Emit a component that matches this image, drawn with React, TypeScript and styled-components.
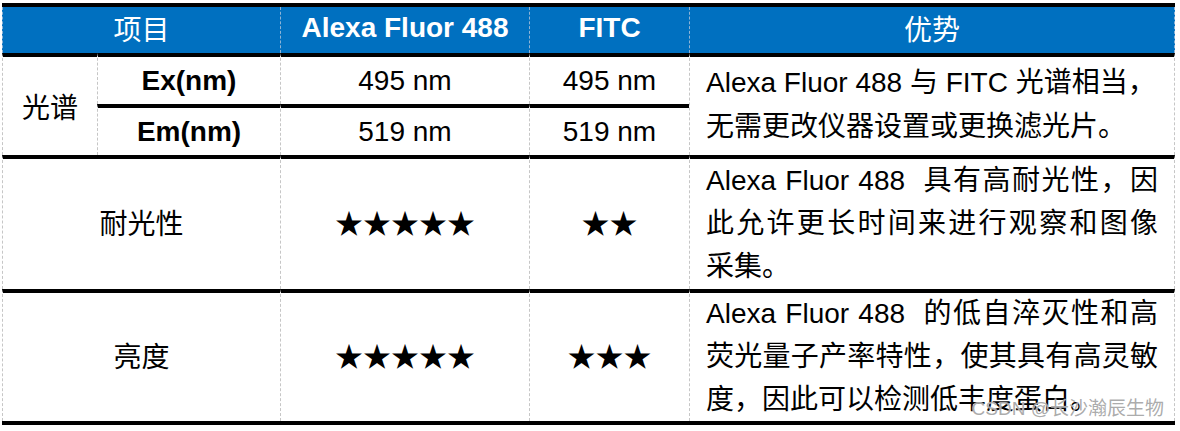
import React from "react";
import { createGlobalStyle, styled } from "styled-components";

const GlobalStyle = createGlobalStyle`
    html, body {
        margin: 0;
        padding: 0;
        background: #ffffff;
    }
    body {
        font-family: "Liberation Sans", "Noto Sans CJK SC", sans-serif;
        color: #000000;
    }
`;

const DASH = "1px dashed #c6c6c6";

const Table = styled.div`
    position: relative;
    margin: 3px 0 0 2px;
    width: 1173px;
    display: grid;
    grid-template-columns: 95px 183px 249px 160px 486px;
    grid-template-rows: 46px 51px 51px 134px 132px;
    border-top: 4px solid #000;
    border-bottom: 4px solid #000;
    font-size: 28px;
`;

interface CellProps {
    $col: string;
    $row: string;
    $rule?: boolean;
    $bold?: boolean;
    $last?: boolean;
}

const Cell = styled.div<CellProps>`
    grid-column: ${(p) => p.$col};
    grid-row: ${(p) => p.$row};
    box-sizing: border-box;
    display: flex;
    align-items: center;
    justify-content: center;
    border-left: ${DASH};
    border-right: ${(p) => (p.$last ? DASH : "none")};
    border-top: ${(p) => (p.$rule ? "4px solid #000" : "none")};
    font-weight: ${(p) => (p.$bold ? 700 : 400)};
    white-space: nowrap;
`;

const HeadCell = styled(Cell)`
    background: #0070c0;
    color: #ffffff;
    padding-bottom: 4px;
    border-left: 1px dashed #8fb4d6;
    border-right: ${(p) => (p.$last ? "1px dashed #8fb4d6" : "none")};
`;

const LabelCell = styled(Cell)`
    padding-bottom: 4px;
`;

const Stars = styled.span`
    font-family: "Noto Sans CJK SC", sans-serif;
    letter-spacing: 0;
`;

const DescCell = styled(Cell)`
    flex-direction: column;
    align-items: stretch;
    justify-content: center;
    padding: 0 16px 2px;
    white-space: normal;
`;

const DescLine = styled.div<{ $justify?: boolean; $lh?: number }>`
    line-height: ${(p) => p.$lh ?? 43}px;
    text-align: ${(p) => (p.$justify ? "justify" : "left")};
    text-align-last: ${(p) => (p.$justify ? "justify" : "left")};
`;

const Watermark = styled.div`
    position: absolute;
    right: 11px;
    bottom: 3px;
    font-size: 19px;
    line-height: 1;
    color: rgba(150, 150, 150, 0.8);
    text-shadow: 0 0 1px #ffffff;
    pointer-events: none;
`;

const App = (): React.JSX.Element => {
    return (
        <>
            <GlobalStyle />
            <Table>
                <HeadCell $col="1 / 3" $row="1">项目</HeadCell>
                <HeadCell $col="3" $row="1" $bold>
                    Alexa Fluor 488
                </HeadCell>
                <HeadCell $col="4" $row="1" $bold>
                    FITC
                </HeadCell>
                <HeadCell $col="5" $row="1" $last>
                    优势
                </HeadCell>

                <Cell $col="1" $row="2 / 4" $rule>
                    光谱
                </Cell>
                <Cell $col="2" $row="2" $rule $bold>
                    Ex(nm)
                </Cell>
                <Cell $col="3" $row="2" $rule>
                    495 nm
                </Cell>
                <Cell $col="4" $row="2" $rule>
                    495 nm
                </Cell>
                <DescCell $col="5" $row="2 / 4" $rule $last>
                    <DescLine $lh={44}>Alexa Fluor 488 与 FITC 光谱相当，</DescLine>
                    <DescLine $lh={44}>无需更改仪器设置或更换滤光片。</DescLine>
                </DescCell>
                <Cell $col="2" $row="3" $rule $bold>
                    Em(nm)
                </Cell>
                <Cell $col="3" $row="3" $rule>
                    519 nm
                </Cell>
                <Cell $col="4" $row="3" $rule>
                    519 nm
                </Cell>

                <LabelCell $col="1 / 3" $row="4" $rule>
                    耐光性
                </LabelCell>
                <LabelCell $col="3" $row="4" $rule>
                    <Stars>★★★★★</Stars>
                </LabelCell>
                <LabelCell $col="4" $row="4" $rule>
                    <Stars>★★</Stars>
                </LabelCell>
                <DescCell $col="5" $row="4" $rule $last>
                    <DescLine $justify>Alexa Fluor 488&nbsp; 具有高耐光性，因</DescLine>
                    <DescLine $justify>此允许更长时间来进行观察和图像</DescLine>
                    <DescLine>采集。</DescLine>
                </DescCell>

                <LabelCell $col="1 / 3" $row="5" $rule>
                    亮度
                </LabelCell>
                <LabelCell $col="3" $row="5" $rule>
                    <Stars>★★★★★</Stars>
                </LabelCell>
                <LabelCell $col="4" $row="5" $rule>
                    <Stars>★★★</Stars>
                </LabelCell>
                <DescCell $col="5" $row="5" $rule $last>
                    <DescLine $justify>Alexa Fluor 488&nbsp; 的低自淬灭性和高</DescLine>
                    <DescLine $justify>荧光量子产率特性，使其具有高灵敏</DescLine>
                    <DescLine>度，因此可以检测低丰度蛋白。</DescLine>
                </DescCell>

                <Watermark>CSDN @长沙瀚辰生物</Watermark>
            </Table>
        </>
    );
};

export default App;
